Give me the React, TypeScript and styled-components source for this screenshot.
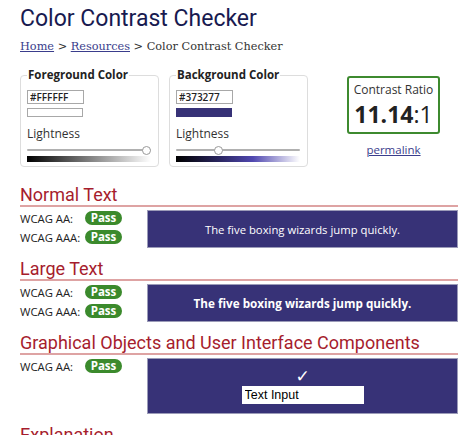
import React from "react";
import styled, { createGlobalStyle } from "styled-components";

const GlobalStyle = createGlobalStyle`
  html, body {
    margin: 0;
    padding: 0;
    background: #ffffff;
  }
  body {
    font-family: "Open Sans", "Liberation Sans", sans-serif;
    color: #222222;
  }
`;

const Page = styled.div`
  width: 438px;
  padding: 0 16px 0 20px;
  overflow: hidden;
  height: 435px;
`;

const Title = styled.h1`
  margin: 5px 0 0;
  font-family: Roboto, "Liberation Sans", sans-serif;
  font-weight: 400;
  font-size: 23px;
  line-height: 28px;
  color: #181a50;
`;

const Crumbs = styled.nav`
  margin-top: 7px;
  font-family: "DejaVu Serif", "Liberation Serif", serif;
  font-size: 11.3px;
  line-height: 14px;
  color: #333333;
`;

const CrumbLink = styled.a`
  color: #3a3d8c;
  text-decoration: underline;
`;

const TopRow = styled.div`
  display: flex;
  align-items: flex-start;
  gap: 10px;
  margin-top: 14px;
`;

const ColorSet = styled.fieldset`
  width: 124px;
  margin: 0;
  padding: 8px 7px 4px 6px;
  border: 1px solid #dddddd;
  border-radius: 4px;
  display: flex;
  flex-direction: column;
`;

const Legend = styled.legend`
  padding: 0 1px;
  margin-left: 0;
  font-weight: 700;
  font-size: 11.5px;
  line-height: 14px;
  color: #222222;
`;

const HexInput = styled.input`
  box-sizing: border-box;
  width: 57px;
  height: 14px;
  padding: 0 2px;
  border: 1px solid #a8a8a8;
  font-family: "Open Sans", sans-serif;
  font-size: 10px;
  font-weight: 600;
  color: #222222;
  outline: none;
`;

const Swatch = styled.div<{ $color: string }>`
  box-sizing: border-box;
  width: 56px;
  height: 9px;
  margin-top: 4px;
  background: ${(p) => p.$color};
  border: 1px solid ${(p) => (p.$color === "#FFFFFF" ? "#a8a8a8" : p.$color)};
`;

const SliderLabel = styled.label`
  margin-top: 9px;
  font-size: 12px;
  line-height: 15px;
  color: #333333;
`;

const Range = styled.input`
  -webkit-appearance: none;
  appearance: none;
  width: 124px;
  height: 10px;
  margin: 4px 0 0;
  background: transparent;

  &::-webkit-slider-runnable-track {
    height: 2px;
    background: #b0b0b0;
    border-radius: 1px;
  }

  &::-webkit-slider-thumb {
    -webkit-appearance: none;
    width: 9px;
    height: 9px;
    margin-top: -3.5px;
    border-radius: 50%;
    background: #ffffff;
    border: 1px solid #9a9a9a;
    box-sizing: border-box;
  }
`;

const Gradient = styled.div<{ $stops: string }>`
  width: 124px;
  height: 6px;
  margin-top: 1px;
  background: linear-gradient(to right, ${(p) => p.$stops});
`;

const RatioArea = styled.div`
  margin: 8px 0 0 29px;
  display: flex;
  flex-direction: column;
  align-items: center;
`;

const RatioBox = styled.div`
  box-sizing: border-box;
  width: 93px;
  height: 58px;
  border: 2px solid #3d8a2f;
  border-radius: 3px;
  display: flex;
  flex-direction: column;
  align-items: center;
  padding-top: 5px;
`;

const RatioLabel = styled.div`
  font-size: 12px;
  line-height: 14px;
  color: #333333;
`;

const RatioValue = styled.div`
  margin-top: 5px;
  font-size: 23px;
  line-height: 24px;
  font-weight: 400;
  color: #222222;

  b {
    font-weight: 700;
  }
`;

const Permalink = styled.a`
  margin-top: 8px;
  font-size: 11.5px;
  line-height: 16px;
  color: #3a3d8c;
  text-decoration: underline;
`;

const Section = styled.section<{ $first?: boolean }>`
  margin-top: ${(p) => (p.$first ? "17px" : "10px")};
`;

const Heading = styled.h2`
  margin: 0;
  font-family: Roboto, "Liberation Sans", sans-serif;
  font-weight: 400;
  font-size: 18px;
  line-height: 21px;
  color: #a61d2d;
  border-bottom: 2px solid #dea3a3;
`;

const SectionBody = styled.div`
  display: flex;
  margin-top: 3px;
`;

const Results = styled.div`
  width: 127px;
  display: flex;
  flex-direction: column;
  gap: 5px;
  padding-top: 1px;
`;

const ResultRow = styled.div`
  display: flex;
  align-items: center;
  height: 14px;
`;

const Level = styled.span`
  width: 65px;
  font-size: 11.3px;
  color: #222222;
`;

const Badge = styled.span`
  width: 37px;
  height: 14px;
  border-radius: 7px;
  background: #3b8a2c;
  color: #ffffff;
  font-weight: 700;
  font-size: 11.5px;
  line-height: 14px;
  text-align: center;
`;

const Sample = styled.div<{ $tall?: boolean; $bold?: boolean }>`
  box-sizing: border-box;
  width: 311px;
  height: ${(p) => (p.$tall ? "56px" : "38px")};
  background: #373277;
  border: 1px solid #9b9bb8;
  color: #ffffff;
  font-size: ${(p) => (p.$bold ? "11.7px" : "11.3px")};
  font-weight: ${(p) => (p.$bold ? 700 : 400)};
  display: flex;
  flex-direction: column;
  align-items: center;
  justify-content: center;
`;

const Check = styled.span`
  font-family: "DejaVu Sans", sans-serif;
  font-size: 17px;
  line-height: 15px;
`;

const DemoInput = styled.input`
  box-sizing: border-box;
  width: 122px;
  height: 18px;
  margin-top: 2px;
  padding: 0 3px;
  border: none;
  background: #ffffff;
  font-family: "Liberation Sans", Arial, sans-serif;
  font-size: 12.5px;
  color: #000000;
  outline: none;
`;

type Result = { level: string };

const ResultList: React.FC<{ items: Result[] }> = ({ items }) => (
  <Results>
    {items.map((r) => (
      <ResultRow key={r.level}>
        <Level>{r.level}</Level>
        <Badge>Pass</Badge>
      </ResultRow>
    ))}
  </Results>
);

const both: Result[] = [{ level: "WCAG AA:" }, { level: "WCAG AAA:" }];

const App: React.FC = (): JSX.Element => {
  return (
    <>
      <GlobalStyle />
      <Page>
        <Title>Color Contrast Checker</Title>
        <Crumbs>
          <CrumbLink href="#">Home</CrumbLink> &gt;{" "}
          <CrumbLink href="#">Resources</CrumbLink> &gt; Color Contrast Checker
        </Crumbs>

        <TopRow>
          <ColorSet>
            <Legend>Foreground Color</Legend>
            <HexInput defaultValue="#FFFFFF" />
            <Swatch $color="#FFFFFF" />
            <SliderLabel>Lightness</SliderLabel>
            <Range type="range" min={0} max={100} defaultValue={100} />
            <Gradient $stops="#000000, #ffffff" />
          </ColorSet>

          <ColorSet>
            <Legend>Background Color</Legend>
            <HexInput defaultValue="#373277" />
            <Swatch $color="#373277" />
            <SliderLabel>Lightness</SliderLabel>
            <Range type="range" min={0} max={100} defaultValue={33} />
            <Gradient $stops="#000000 0%, #2a2660 35%, #5048b0 62%, #ffffff 100%" />
          </ColorSet>

          <RatioArea>
            <RatioBox>
              <RatioLabel>Contrast Ratio</RatioLabel>
              <RatioValue>
                <b>11.14</b>:1
              </RatioValue>
            </RatioBox>
            <Permalink href="#">permalink</Permalink>
          </RatioArea>
        </TopRow>

        <Section $first>
          <Heading>Normal Text</Heading>
          <SectionBody>
            <ResultList items={both} />
            <Sample>The five boxing wizards jump quickly.</Sample>
          </SectionBody>
        </Section>

        <Section>
          <Heading>Large Text</Heading>
          <SectionBody>
            <ResultList items={both} />
            <Sample $bold>The five boxing wizards jump quickly.</Sample>
          </SectionBody>
        </Section>

        <Section>
          <Heading>Graphical Objects and User Interface Components</Heading>
          <SectionBody>
            <ResultList items={[{ level: "WCAG AA:" }]} />
            <Sample $tall>
              <Check>✓</Check>
              <DemoInput defaultValue="Text Input" />
            </Sample>
          </SectionBody>
        </Section>

        <Section>
          <Heading>Explanation</Heading>
        </Section>
      </Page>
    </>
  );
};

export default App;
